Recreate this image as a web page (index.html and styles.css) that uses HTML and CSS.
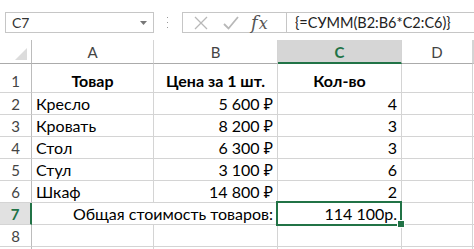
FILE: index.html
```html
<!DOCTYPE html>
<html lang="ru">
<head>
<meta charset="utf-8">
<title>Лист1</title>
<link rel="stylesheet" href="styles.css">
</head>
<body>
<div class="app">
  <div class="fbar">
    <div class="namebox">
      <span class="ref">C7</span>
      <svg class="drop" width="7" height="4" viewBox="0 0 7 4"><path d="M0 0h7L3.5 4z" fill="#777"/></svg>
    </div>
    <svg class="grip" width="3" height="11" viewBox="0 0 3 11">
      <rect x="1" y="0" width="1" height="1" fill="#9a9a9a"/>
      <rect x="1" y="5" width="1" height="1" fill="#9a9a9a"/>
      <rect x="1" y="10" width="1" height="1" fill="#9a9a9a"/>
    </svg>
    <div class="fbox">
      <div class="btns">
        <svg class="btn" width="14" height="14" viewBox="0 0 14 14"><path d="M1 1L13 13M13 1L1 13" stroke="#b8b8b8" stroke-width="1.3" fill="none"/></svg>
        <svg class="btn" width="16" height="14" viewBox="0 0 16 14"><path d="M1 8L5.5 12.5L15 1" stroke="#b8b8b8" stroke-width="1.8" fill="none"/></svg>
        <span class="fx"><i>f</i><i class="x">x</i></span>
      </div>
      <div class="formula">{=СУММ(B2:B6*C2:C6)}</div>
    </div>
  </div>

  <div class="sheet">
    <div class="corner"><svg width="12" height="12" viewBox="0 0 12 12"><path d="M12 0V12H0z" fill="#dcdcdc"/></svg></div>
    <div class="ch">A</div>
    <div class="ch">B</div>
    <div class="ch sel">C</div>
    <div class="ch">D</div>
    <div class="ch"></div>

    <div class="rh r1">1</div>
    <div class="c r1 hd">Товар</div>
    <div class="c r1 hd">Цена за 1 шт.</div>
    <div class="c r1 hd">Кол-во</div>
    <div class="c r1"></div>
    <div class="c r1"></div>

    <div class="rh">2</div>
    <div class="c">Кресло</div>
    <div class="c num">5 600 ₽</div>
    <div class="c num">4</div>
    <div class="c"></div>
    <div class="c"></div>

    <div class="rh">3</div>
    <div class="c">Кровать</div>
    <div class="c num">8 200 ₽</div>
    <div class="c num">3</div>
    <div class="c"></div>
    <div class="c"></div>

    <div class="rh">4</div>
    <div class="c">Стол</div>
    <div class="c num">6 300 ₽</div>
    <div class="c num">3</div>
    <div class="c"></div>
    <div class="c"></div>

    <div class="rh">5</div>
    <div class="c">Стул</div>
    <div class="c num">3 100 ₽</div>
    <div class="c num">6</div>
    <div class="c"></div>
    <div class="c"></div>

    <div class="rh">6</div>
    <div class="c">Шкаф</div>
    <div class="c num">14 800 ₽</div>
    <div class="c num">2</div>
    <div class="c"></div>
    <div class="c"></div>

    <div class="rh sel">7</div>
    <div class="c num merged">Общая стоимость товаров:</div>
    <div class="c num active">114 100р.</div>
    <div class="c"></div>
    <div class="c"></div>

    <div class="rh">8</div>
    <div class="c"></div>
    <div class="c"></div>
    <div class="c"></div>
    <div class="c"></div>
    <div class="c"></div>

    <div class="rh"></div>
    <div class="c"></div>
    <div class="c"></div>
    <div class="c"></div>
    <div class="c"></div>
    <div class="c"></div>
  </div>
</div>
</body>
</html>
```

FILE: styles.css
```css
* { box-sizing: border-box; }

html, body {
  margin: 0;
  padding: 0;
  background: #fff;
  overflow: hidden;
}

.app {
  width: 474px;
  height: 249px;
  font-family: Lato, "Noto Sans", sans-serif;
  color: #000;
  overflow: hidden;
}

/* formula bar */
.fbar {
  height: 40px;
  display: flex;
  align-items: flex-start;
  padding: 12px 0 0 5px;
}

.namebox {
  width: 149px;
  height: 21px;
  border: 1px solid #c6c6c6;
  display: flex;
  align-items: center;
  justify-content: space-between;
  padding: 0 6px 0 6px;
  font-size: 14px;
  color: #333;
}

.grip {
  margin: 5px 13px 0 12px;
}

.fbox {
  flex: 1;
  height: 21px;
  border: 1px solid #c6c6c6;
  border-right: none;
  display: flex;
}

.btns {
  width: 103px;
  display: flex;
  align-items: center;
  padding-left: 11px;
}

.btn { margin-right: 15px; }
.btn + .btn { margin-right: 12px; }

.fx {
  font-family: "DejaVu Serif", "Liberation Serif", serif;
  font-size: 18px;
  color: #555;
  line-height: 1;
}
.fx .x { font-size: 16px; margin-left: 1px; }

.formula {
  flex: 1;
  border-left: 1px solid #c6c6c6;
  padding-left: 8px;
  font-size: 14.5px;
  line-height: 19px;
  color: #222;
}

/* worksheet grid */
.sheet {
  display: grid;
  grid-template-columns: 32px 122px 124px 124px 71px 1px;
  grid-template-rows: 24px 29px repeat(8, 22px);
  font-size: 16px;
}

.corner, .ch, .rh, .c {
  border-right: 1px solid #d4d4d4;
  border-bottom: 1px solid #d4d4d4;
  white-space: nowrap;
  overflow: hidden;
}

.corner {
  display: flex;
  align-items: flex-end;
  justify-content: flex-end;
  padding: 0 4px 3px 0;
  border-right-color: #bcbcbc;
  border-bottom-color: #ababab;
}

.ch {
  display: flex;
  align-items: center;
  justify-content: center;
  border-bottom-color: #ababab;
  color: #444;
  font-size: 15px;
  padding-top: 1px;
}

.ch.sel {
  background: #d6d6d6;
  border-bottom: 2px solid #217346;
  color: #217346;
  font-weight: bold;
}

.rh {
  display: flex;
  align-items: center;
  justify-content: center;
  border-right-color: #bcbcbc;
  color: #444;
  font-size: 15px;
}

.rh.r1 { padding-top: 5px; }

.rh.sel {
  background: #e1e1e1;
  border-right: 2px solid #217346;
  color: #217346;
  font-weight: bold;
}

.c {
  display: flex;
  align-items: center;
  padding: 0 4px;
}

.c.r1 { padding-top: 5px; }

.c.hd {
  justify-content: center;
  font-weight: bold;
}

.c.num { justify-content: flex-end; }

.c.merged { grid-column: span 2; }

/* selection frame around the active cell */
.c.active { position: relative; overflow: visible; }

.c.active::after {
  content: "";
  position: absolute;
  left: -2px;
  top: -2px;
  right: -1px;
  bottom: -2px;
  border: 2px solid #217346;
}

.c.active::before {
  content: "";
  position: absolute;
  right: -4px;
  bottom: -4px;
  width: 6px;
  height: 6px;
  background: #217346;
  border: 1px solid #fff;
  z-index: 1;
}
```
